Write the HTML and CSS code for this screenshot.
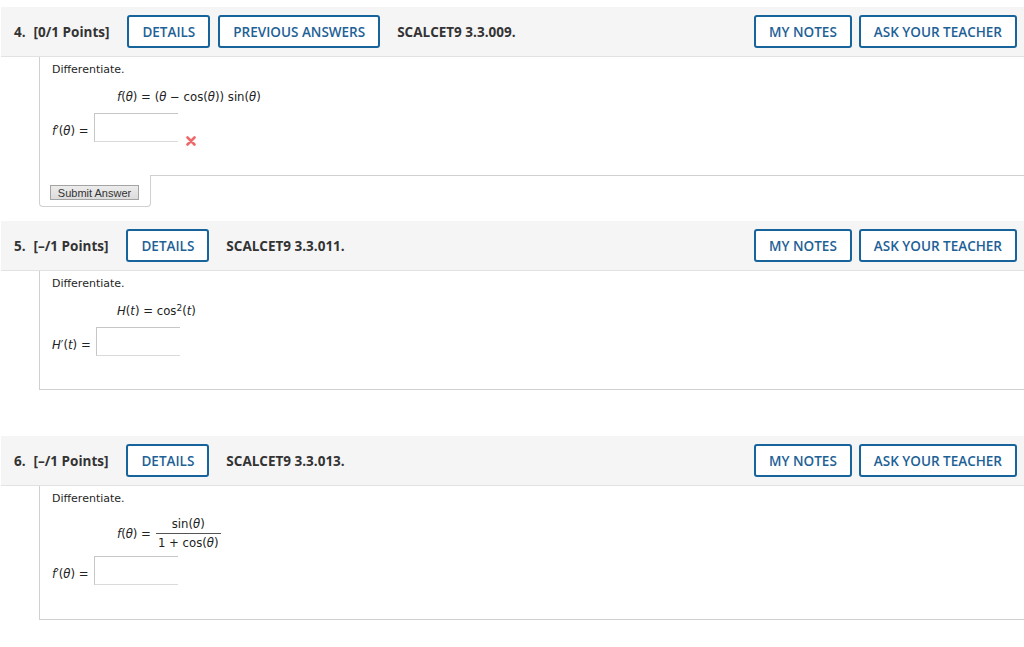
FILE: index.html
```html
<!DOCTYPE html>
<html lang="en">
<head>
<meta charset="utf-8">
<title>SCALCET9 3.3</title>
<link rel="stylesheet" href="styles.css">
</head>
<body>
<div class="page">

  <section class="question">
    <div class="qhead">
      <span class="qnum">4.</span>
      <span class="qpts">[0/1 Points]</span>
      <button class="btn">DETAILS</button>
      <button class="btn">PREVIOUS ANSWERS</button>
      <span class="qcode">SCALCET9 3.3.009.</span>
      <span class="spacer"></span>
      <button class="btn">MY NOTES</button>
      <button class="btn">ASK YOUR TEACHER</button>
    </div>
    <div class="qbody">
      <div class="prompt">Differentiate.</div>
      <div class="formula"><i>f</i>(<i>θ</i>) = (<i>θ</i> − cos(<i>θ</i>)) sin(<i>θ</i>)</div>
      <div class="answer">
        <span class="label"><i>f</i>′(<i>θ</i>) =</span>
        <span class="input"></span>
        <svg class="wrong" width="10" height="10" viewBox="0 0 10 10"><path d="M1.5 1.5 L8.5 8.5 M8.5 1.5 L1.5 8.5" stroke="#ee6a6a" stroke-width="2.6" stroke-linecap="round"/></svg>
      </div>
    </div>
    <div class="qfoot">
      <div class="tab"><button class="submit">Submit Answer</button></div>
      <div class="fill"></div>
    </div>
  </section>

  <section class="question">
    <div class="qhead">
      <span class="qnum">5.</span>
      <span class="qpts">[–/1 Points]</span>
      <button class="btn">DETAILS</button>
      <span class="qcode">SCALCET9 3.3.011.</span>
      <span class="spacer"></span>
      <button class="btn">MY NOTES</button>
      <button class="btn">ASK YOUR TEACHER</button>
    </div>
    <div class="qbody closed">
      <div class="prompt">Differentiate.</div>
      <div class="formula"><i>H</i>(<i>t</i>) = cos<sup>2</sup>(<i>t</i>)</div>
      <div class="answer">
        <span class="label"><i>H</i>′(<i>t</i>) =</span>
        <span class="input"></span>
      </div>
    </div>
    <div class="qfoot"></div>
  </section>

  <section class="question">
    <div class="qhead">
      <span class="qnum">6.</span>
      <span class="qpts">[–/1 Points]</span>
      <button class="btn">DETAILS</button>
      <span class="qcode">SCALCET9 3.3.013.</span>
      <span class="spacer"></span>
      <button class="btn">MY NOTES</button>
      <button class="btn">ASK YOUR TEACHER</button>
    </div>
    <div class="qbody closed tall">
      <div class="prompt">Differentiate.</div>
      <div class="formula frac-row">
        <span><i>f</i>(<i>θ</i>) =</span>
        <span class="frac">
          <span class="num">sin(<i>θ</i>)</span>
          <span class="den">1 + cos(<i>θ</i>)</span>
        </span>
      </div>
      <div class="answer tight">
        <span class="label"><i>f</i>′(<i>θ</i>) =</span>
        <span class="input"></span>
      </div>
    </div>
    <div class="qfoot"></div>
  </section>

</div>
</body>
</html>
```

FILE: styles.css
```css
html, body {
  margin: 0;
  padding: 0;
  background: #ffffff;
  overflow: hidden;
}

body {
  font-family: "Open Sans", "DejaVu Sans", sans-serif;
  color: #333333;
}

.page {
  padding-top: 7px;
}

.question {
  margin-bottom: 14px;
}

/* ---------- header bar ---------- */
.qhead {
  display: flex;
  align-items: center;
  height: 49px;
  margin-left: 1px;
  padding: 0 7px 0 13px;
  background: #f5f5f5;
  border-bottom: 1px solid #e2e2e2;
  font-size: 13.5px;
  font-weight: 700;
  color: #333333;
  white-space: nowrap;
}

.qnum {
  margin-right: 8px;
}

.qpts {
  margin-right: 18px;
}

.qcode {
  margin-left: 9px;
}

.spacer {
  flex: 1;
}

.btn {
  box-sizing: border-box;
  height: 33px;
  padding: 0 13px;
  margin-right: 8px;
  background: #ffffff;
  border: 2px solid #17639b;
  border-radius: 3px;
  font-family: "Open Sans", sans-serif;
  font-size: 13.5px;
  font-weight: 600;
  color: #1d6196;
  letter-spacing: 0;
  cursor: pointer;
}

.spacer + .btn {
  margin-right: 7px;
}

.btn:last-child {
  margin-right: 0;
}

/* ---------- question body ---------- */
.qbody {
  margin-left: 39px;
  padding: 6px 12px 33px;
  border-left: 1px solid #d0d0d0;
  font-family: "DejaVu Sans", Verdana, sans-serif;
  font-size: 11px;
  line-height: 14px;
  color: #222222;
}

.qbody.closed {
  border-bottom: 1px solid #d0d0d0;
}

.qbody.tall {
  padding-bottom: 34px;
}

.prompt {
  color: #1f1f1f;
}

.formula {
  margin-top: 13px;
  margin-left: 65px;
  font-size: 11.7px;
  white-space: nowrap;
}

.formula sup {
  font-size: 9px;
  line-height: 0;
  vertical-align: 4px;
}

.frac-row {
  display: flex;
  align-items: center;
  margin-top: 11px;
}

.frac {
  display: inline-flex;
  flex-direction: column;
  align-items: center;
  margin-left: 5px;
}

.frac .num {
  padding: 0 2px 2px;
  border-bottom: 1px solid #555555;
  line-height: 14px;
  align-self: stretch;
  text-align: center;
}

.frac .den {
  padding: 2px 2px 0;
  line-height: 14px;
}

.answer {
  display: flex;
  align-items: center;
  margin-top: 9px;
  font-size: 11.7px;
}

.answer.tight {
  margin-top: 6px;
}

.label {
  padding-top: 6px;
  margin-right: 5px;
  white-space: nowrap;
}

.input {
  box-sizing: border-box;
  display: block;
  width: 84px;
  height: 29px;
  background: #ffffff;
  border-top: 1px solid #c6c6c6;
  border-left: 1px solid #c6c6c6;
  border-bottom: 1px solid #dadada;
}

.wrong {
  align-self: flex-end;
  margin-left: 8px;
  margin-bottom: -4px;
}

/* ---------- submit footer ---------- */
.qfoot {
  display: flex;
  height: 32px;
  margin-left: 39px;
}

.tab {
  box-sizing: border-box;
  width: 112px;
  height: 32px;
  padding: 10px 0 0 10px;
  border-left: 1px solid #d0d0d0;
  border-right: 1px solid #d0d0d0;
  border-bottom: 1px solid #d0d0d0;
  border-radius: 0 0 4px 4px;
}

.fill {
  flex: 1;
  border-top: 1px solid #d0d0d0;
}

.submit {
  box-sizing: border-box;
  display: block;
  width: 89px;
  height: 15px;
  padding: 0;
  background: linear-gradient(#ececec, #dcdcdc);
  border: 1px solid #a3a3a3;
  border-radius: 0;
  font-family: "Liberation Sans", Arial, sans-serif;
  font-size: 11px;
  line-height: 12px;
  color: #333333;
}
```
